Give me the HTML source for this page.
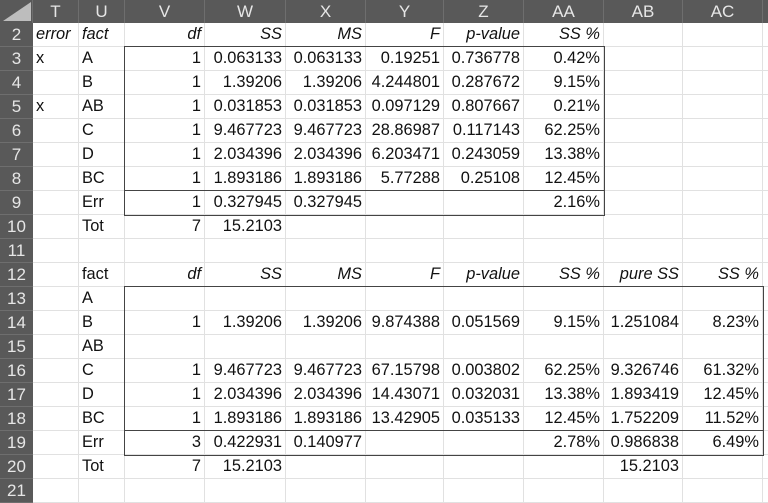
<!DOCTYPE html>
<html><head><style>
body{margin:0;width:768px;height:484px;overflow:hidden;background:#fff;font-family:"Liberation Sans",sans-serif;position:relative;}
table{border-collapse:separate;border-spacing:0;table-layout:fixed;position:absolute;left:0;top:0;width:773px;}
td{height:24px;padding:0 3px;font-size:16.4px;color:#111;border-right:1px solid #e1e1e1;border-bottom:1px solid #e1e1e1;white-space:nowrap;overflow:hidden;box-sizing:border-box;}
tr.h td{height:23px;background:#595959;color:#e6e6e6;text-align:center;border-right:1px solid #6e6e6e;border-bottom:none;font-size:17px;}
td.r{background:#595959;color:#e6e6e6;text-align:center;border-right:none;border-bottom:1px solid #6e6e6e;font-size:17px;}
.n{text-align:right}
i{font-style:italic}
.bx{position:absolute;border:1px solid #444;box-sizing:border-box;}
.ln{position:absolute;height:1px;background:#444;}
</style></head><body>
<table>
<colgroup><col style="width:33px"><col style="width:46px"><col style="width:46px"><col style="width:80px"><col style="width:81px"><col style="width:80px"><col style="width:78px"><col style="width:80px"><col style="width:80px"><col style="width:79px"><col style="width:80px"><col style="width:10px"></colgroup>
<tr class="h"><td></td><td>T</td><td>U</td><td>V</td><td>W</td><td>X</td><td>Y</td><td>Z</td><td>AA</td><td>AB</td><td>AC</td><td></td></tr>
<tr><td class="r">2</td><td><i>error</i></td><td><i>fact</i></td><td class="n"><i>df</i></td><td class="n"><i>SS</i></td><td class="n"><i>MS</i></td><td class="n"><i>F</i></td><td class="n"><i>p-value</i></td><td class="n"><i>SS %</i></td><td></td><td></td><td></td></tr>
<tr><td class="r">3</td><td>x</td><td>A</td><td class="n">1</td><td class="n">0.063133</td><td class="n">0.063133</td><td class="n">0.19251</td><td class="n">0.736778</td><td class="n">0.42%</td><td></td><td></td><td></td></tr>
<tr><td class="r">4</td><td></td><td>B</td><td class="n">1</td><td class="n">1.39206</td><td class="n">1.39206</td><td class="n">4.244801</td><td class="n">0.287672</td><td class="n">9.15%</td><td></td><td></td><td></td></tr>
<tr><td class="r">5</td><td>x</td><td>AB</td><td class="n">1</td><td class="n">0.031853</td><td class="n">0.031853</td><td class="n">0.097129</td><td class="n">0.807667</td><td class="n">0.21%</td><td></td><td></td><td></td></tr>
<tr><td class="r">6</td><td></td><td>C</td><td class="n">1</td><td class="n">9.467723</td><td class="n">9.467723</td><td class="n">28.86987</td><td class="n">0.117143</td><td class="n">62.25%</td><td></td><td></td><td></td></tr>
<tr><td class="r">7</td><td></td><td>D</td><td class="n">1</td><td class="n">2.034396</td><td class="n">2.034396</td><td class="n">6.203471</td><td class="n">0.243059</td><td class="n">13.38%</td><td></td><td></td><td></td></tr>
<tr><td class="r">8</td><td></td><td>BC</td><td class="n">1</td><td class="n">1.893186</td><td class="n">1.893186</td><td class="n">5.77288</td><td class="n">0.25108</td><td class="n">12.45%</td><td></td><td></td><td></td></tr>
<tr><td class="r">9</td><td></td><td>Err</td><td class="n">1</td><td class="n">0.327945</td><td class="n">0.327945</td><td></td><td></td><td class="n">2.16%</td><td></td><td></td><td></td></tr>
<tr><td class="r">10</td><td></td><td>Tot</td><td class="n">7</td><td class="n">15.2103</td><td></td><td></td><td></td><td></td><td></td><td></td><td></td></tr>
<tr><td class="r">11</td><td></td><td></td><td></td><td></td><td></td><td></td><td></td><td></td><td></td><td></td><td></td></tr>
<tr><td class="r">12</td><td></td><td>fact</td><td class="n"><i>df</i></td><td class="n"><i>SS</i></td><td class="n"><i>MS</i></td><td class="n"><i>F</i></td><td class="n"><i>p-value</i></td><td class="n"><i>SS %</i></td><td class="n"><i>pure SS</i></td><td class="n"><i>SS %</i></td><td></td></tr>
<tr><td class="r">13</td><td></td><td>A</td><td></td><td></td><td></td><td></td><td></td><td></td><td></td><td></td><td></td></tr>
<tr><td class="r">14</td><td></td><td>B</td><td class="n">1</td><td class="n">1.39206</td><td class="n">1.39206</td><td class="n">9.874388</td><td class="n">0.051569</td><td class="n">9.15%</td><td class="n">1.251084</td><td class="n">8.23%</td><td></td></tr>
<tr><td class="r">15</td><td></td><td>AB</td><td></td><td></td><td></td><td></td><td></td><td></td><td></td><td></td><td></td></tr>
<tr><td class="r">16</td><td></td><td>C</td><td class="n">1</td><td class="n">9.467723</td><td class="n">9.467723</td><td class="n">67.15798</td><td class="n">0.003802</td><td class="n">62.25%</td><td class="n">9.326746</td><td class="n">61.32%</td><td></td></tr>
<tr><td class="r">17</td><td></td><td>D</td><td class="n">1</td><td class="n">2.034396</td><td class="n">2.034396</td><td class="n">14.43071</td><td class="n">0.032031</td><td class="n">13.38%</td><td class="n">1.893419</td><td class="n">12.45%</td><td></td></tr>
<tr><td class="r">18</td><td></td><td>BC</td><td class="n">1</td><td class="n">1.893186</td><td class="n">1.893186</td><td class="n">13.42905</td><td class="n">0.035133</td><td class="n">12.45%</td><td class="n">1.752209</td><td class="n">11.52%</td><td></td></tr>
<tr><td class="r">19</td><td></td><td>Err</td><td class="n">3</td><td class="n">0.422931</td><td class="n">0.140977</td><td></td><td></td><td class="n">2.78%</td><td class="n">0.986838</td><td class="n">6.49%</td><td></td></tr>
<tr><td class="r">20</td><td></td><td>Tot</td><td class="n">7</td><td class="n">15.2103</td><td></td><td></td><td></td><td></td><td class="n">15.2103</td><td></td><td></td></tr>
<tr><td class="r">21</td><td></td><td></td><td></td><td></td><td></td><td></td><td></td><td></td><td></td><td></td><td></td></tr>
</table>
<div class="bx" style="left:124px;top:46px;width:481px;height:170px"></div>
<div class="ln" style="left:124px;top:190px;width:481px"></div>
<div class="bx" style="left:124px;top:286px;width:640px;height:170px"></div>
<div class="ln" style="left:124px;top:430px;width:640px"></div>
<div style="position:absolute;left:0;top:0;width:0;height:0;border-left:28px solid transparent;border-bottom:19px solid #bdbdbd;margin:2px 0 0 3px"></div>
</body></html>
